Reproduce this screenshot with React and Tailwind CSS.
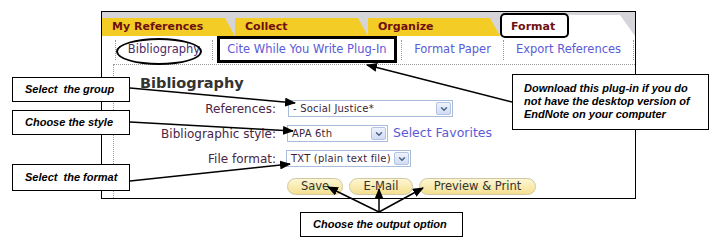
import React from "react";
import { ChevronDown } from "lucide-react";

const verdana = { fontFamily: '"DejaVu Sans", Verdana, sans-serif' };
const arial = { fontFamily: '"Liberation Sans", Arial, sans-serif' };

const Tab = ({ label, width }) => (
    <div
        className={`h-[18px] ${width} bg-[#f3cd26] pl-[10px] text-[11px] leading-[18px] font-bold text-[#6e1010] [clip-path:polygon(0_0,calc(100%-10px)_0,100%_100%,0_100%)]`}
    >
        {label}
    </div>
);

const Select = ({ value, width }) => (
    <div className={`h-[17px] ${width} border border-[#a9bcdc] bg-white flex items-center justify-between pl-[4px] pr-[1px]`}>
        <span className="text-[10px] leading-none text-[#3b1f3b] whitespace-nowrap tracking-[0.2px]">{value}</span>
        <span className="h-[13px] w-[15px] rounded-[2px] border border-[#b3c3e0] bg-gradient-to-b from-[#eef3fc] to-[#cfdcf3] flex items-center justify-center">
            <ChevronDown size={10} strokeWidth={3.5} className="text-[#4d6185]" />
        </span>
    </div>
);

const Pill = ({ label, width }) => (
    <div className={`h-[17px] ${width} rounded-full border border-[#cfc7a4] bg-gradient-to-b from-[#fdf6d2] to-[#f5e091] flex items-center justify-center text-[11.5px] leading-none text-[#333]`}>
        {label}
    </div>
);

const Note = ({ className, children }) => (
    <div
        className={`absolute bg-white border border-black text-[11px] font-bold italic text-black ${className}`}
        style={arial}
    >
        {children}
    </div>
);

const App = () => {
    return (
        <div className="relative w-[722px] h-[251px] bg-white overflow-hidden pt-[11px] pl-[101px]" style={verdana}>
            {/* screenshot frame */}
            <div className="w-[535px] h-[188px] border border-black flex flex-col">
                <div className="h-[24px] bg-[#d5d5d9] flex items-end">
                    <Tab label="My References" width="w-[133px]" />
                    <Tab label="Collect" width="w-[133px]" />
                    <Tab label="Organize" width="w-[132px]" />
                    <div className="h-[21px] w-[135px] bg-white pl-[11px] pt-[3px] text-[11px] leading-[18px] font-bold text-[#6e1010] [clip-path:polygon(0_0,calc(100%-15px)_0,100%_100%,0_100%)]">
                        Format
                    </div>
                </div>

                <div className="h-[28px] flex items-center pl-[13px] bg-white text-[11.5px] text-[#5b5bd6]">
                    <div className="h-[20px] w-[97px] border-l border-dotted border-[#999] flex items-center justify-center text-[#4b2a6b]">Bibliography</div>
                    <div className="h-[20px] w-[189px] border-l border-dotted border-[#999] flex items-center justify-center">Cite While You Write Plug-In</div>
                    <div className="h-[20px] w-[102px] border-l border-dotted border-[#999] flex items-center justify-center">Format Paper</div>
                    <div className="h-[20px] w-[131px] border-x border-dotted border-[#999] flex items-center justify-center">Export References</div>
                </div>

                <div className="flex-1 ml-[11px] border-t border-l border-dotted border-[#999] pt-[8px]">
                    <div className="pl-[26px] text-[14.5px] leading-[20px] font-bold text-[#333]">Bibliography</div>
                    <div className="mt-[3px] text-[12px] text-[#4a2545]">
                        <div className="h-[25px] flex items-center">
                            <div className="w-[162px] text-right">References:</div>
                            <div className="ml-[12px]"><Select value="- Social Justice*" width="w-[165px]" /></div>
                        </div>
                        <div className="h-[25px] flex items-center">
                            <div className="w-[162px] text-right">Bibliographic style:</div>
                            <div className="ml-[11px]"><Select value="APA 6th" width="w-[101px]" /></div>
                            <div className="ml-[5px] text-[12.5px] text-[#5b5bd6]">Select Favorites</div>
                        </div>
                        <div className="h-[25px] flex items-center">
                            <div className="w-[162px] text-right">File format:</div>
                            <div className="ml-[10px]"><Select value="TXT (plain text file)" width="w-[125px]" /></div>
                        </div>
                    </div>
                    <div className="mt-[7px] pl-[173px] flex gap-[6px]">
                        <Pill label="Save" width="w-[56px]" />
                        <Pill label="E-Mail" width="w-[64px]" />
                        <Pill label="Preview & Print" width="w-[117px]" />
                    </div>
                </div>
            </div>

            {/* highlight marks */}
            <div className="absolute left-[116px] top-[38px] w-[86px] h-[27px] rounded-[50%] border-[2.5px] border-black" />
            <div className="absolute left-[217px] top-[36px] w-[180px] h-[27px] border-[3px] border-black" />
            <div className="absolute left-[500px] top-[13px] w-[69px] h-[25px] rounded-[5px] border-2 border-black" />

            {/* callouts */}
            <Note className="left-[12px] top-[77px] w-[118px] h-[25px] pl-[12px] leading-[23px] whitespace-pre">Select  the group</Note>
            <Note className="left-[12px] top-[110px] w-[118px] h-[25px] pl-[12px] leading-[23px]">Choose the style</Note>
            <Note className="left-[12px] top-[164px] w-[118px] h-[27px] pl-[12px] leading-[25px] whitespace-pre">Select  the format</Note>
            <Note className="left-[512px] top-[74px] w-[197px] h-[56px] pl-[11px] pt-[7px] leading-[13px] text-[11.4px] whitespace-nowrap">
                Download this plug-in if you do<br />not have the desktop version of<br />EndNote on your computer
            </Note>
            <Note className="left-[300px] top-[212px] w-[163px] h-[25px] pl-[12px] leading-[23px]">Choose the output option</Note>

            <svg className="absolute inset-0 pointer-events-none" width="722" height="251">
                <defs>
                    <marker id="ah" markerWidth="11" markerHeight="9" refX="10" refY="4.5" orient="auto" markerUnits="userSpaceOnUse">
                        <path d="M0,0 L11,4.5 L0,9 z" fill="black" />
                    </marker>
                </defs>
                <g stroke="black" strokeWidth="1.5" fill="none" markerEnd="url(#ah)">
                    <line x1="130" y1="88" x2="295" y2="103" />
                    <line x1="130" y1="122" x2="293" y2="131" />
                    <line x1="130" y1="181" x2="290" y2="164" />
                    <line x1="512" y1="102" x2="367" y2="65" />
                    <line x1="379" y1="212" x2="328" y2="187" />
                    <line x1="379" y1="212" x2="379" y2="189" />
                    <line x1="379" y1="212" x2="423" y2="188" />
                </g>
            </svg>
        </div>
    );
};

export default App;
